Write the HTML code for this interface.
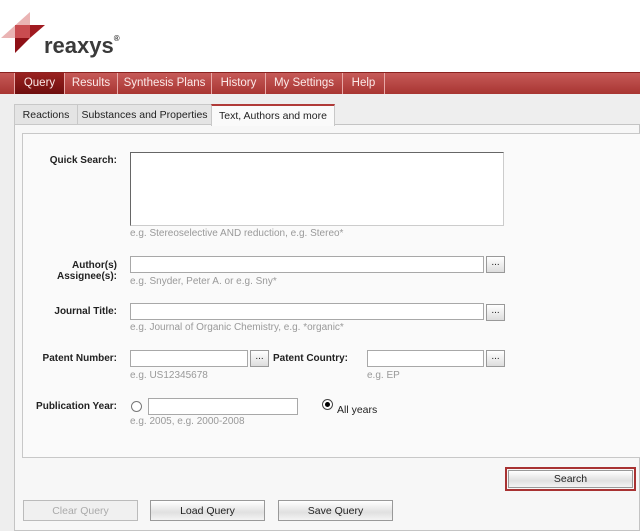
<!DOCTYPE html>
<html><head><style>
*{margin:0;padding:0;box-sizing:border-box}
body{width:640px;height:531px;background:#fff;font-family:"Liberation Sans",sans-serif;font-size:11px;position:relative;overflow:hidden;color:#222}
.a{position:absolute}
.nav{left:0;top:72px;width:640px;height:22px;background:linear-gradient(#c65a58,#a83532);border-top:1px solid #8a2220}
.nav span{position:absolute;top:0;height:21px;line-height:20px;color:#fbe9e8;font-size:11.5px;text-align:center;border-left:1px solid #e8a8a6}
.gray{left:0;top:94px;width:640px;height:437px;background:#eeeeee}
.st{top:104px;height:21px;line-height:20px;text-align:center;border:1px solid #c8c8c8;background:#e4e4e4;font-size:10.5px}
.panel{left:14px;top:124px;width:626px;height:407px;background:#f7f7f7;border:1px solid #c4c4c4}
.box{left:22px;top:133px;width:618px;height:325px;background:#fafafa;border:1px solid #c8c8c8;border-right:none}
.lbl{font-weight:bold;text-align:right;font-size:10px}
.in{background:#fff;border:1px solid #a8a8a8}
.hint{color:#999;font-size:10px}
.dot{width:19px;height:17px;border:1px solid #999;background:linear-gradient(#fff,#ddd);font-size:10px;text-align:center;line-height:12px}
.btn{height:21px;border:1px solid #999;background:linear-gradient(#fff,#e0e0e0 60%,#f4f4f4);text-align:center;line-height:20px;font-size:10.5px}
.rad{width:11px;height:11px;border-radius:50%;border:1px solid #777;background:#fff}
</style></head><body>
<svg class="a" style="left:0;top:0" width="46" height="56" viewBox="0 0 46 56">
<polygon points="30,12 30,25 15,25 15,38 1,38" fill="#eab4b4"/>
<polygon points="15,25 30,25 30,38 15,38" fill="#c94c50"/>
<polygon points="30,25 45,25 30,38" fill="#a01a20"/>
<polygon points="15,38 30,38 15,53" fill="#8e1016"/>
</svg>
<div class="a" style="left:44px;top:33px;font-size:22px;font-weight:bold;color:#3a3a3a;letter-spacing:0">reaxys<sup style="font-size:8px;vertical-align:12px">®</sup></div>
<div class="a nav">
<span style="left:14px;width:50px;background:linear-gradient(#9a2220,#6e0e0e);border-left:1px solid #e8a8a6">Query</span>
<span style="left:64px;width:53px">Results</span>
<span style="left:117px;width:94px">Synthesis Plans</span>
<span style="left:211px;width:54px">History</span>
<span style="left:265px;width:77px">My Settings</span>
<span style="left:342px;width:42px">Help</span>
<span style="left:384px;width:1px"></span>
</div>
<div class="a gray"></div>
<div class="a panel"></div>
<div class="a st" style="left:14px;width:64px">Reactions</div>
<div class="a st" style="left:77px;width:135px">Substances and Properties</div>
<div class="a st" style="left:211px;width:124px;background:#fafafa;border-top:2px solid #b03a38;border-bottom:none;height:22px">Text, Authors and more</div>
<div class="a box"></div>

<div class="a lbl" style="left:30px;top:155px;width:87px">Quick Search:</div>
<div class="a in" style="left:130px;top:152px;width:374px;height:74px;border:1px solid #666;border-right-color:#ccc;border-bottom-color:#ccc"></div>
<div class="a hint" style="left:130px;top:228px">e.g. Stereoselective AND reduction, e.g. Stereo*</div>

<div class="a lbl" style="left:30px;top:260px;width:87px;line-height:11px">Author(s)<br>Assignee(s):</div>
<div class="a in" style="left:130px;top:256px;width:354px;height:17px"></div>
<div class="a dot" style="left:486px;top:256px">...</div>
<div class="a hint" style="left:130px;top:276px">e.g. Snyder, Peter A. or e.g. Sny*</div>

<div class="a lbl" style="left:30px;top:306px;width:87px">Journal Title:</div>
<div class="a in" style="left:130px;top:303px;width:354px;height:17px"></div>
<div class="a dot" style="left:486px;top:304px">...</div>
<div class="a hint" style="left:130px;top:322px">e.g. Journal of Organic Chemistry, e.g. *organic*</div>

<div class="a lbl" style="left:30px;top:353px;width:87px">Patent Number:</div>
<div class="a in" style="left:130px;top:350px;width:118px;height:17px"></div>
<div class="a dot" style="left:250px;top:350px">...</div>
<div class="a lbl" style="left:273px;top:353px;text-align:left">Patent Country:</div>
<div class="a in" style="left:367px;top:350px;width:117px;height:17px"></div>
<div class="a dot" style="left:486px;top:350px">...</div>
<div class="a hint" style="left:130px;top:370px">e.g. US12345678</div>
<div class="a hint" style="left:367px;top:370px">e.g. EP</div>

<div class="a lbl" style="left:25px;top:401px;width:92px">Publication Year:</div>
<div class="a rad" style="left:131px;top:401px"></div>
<div class="a in" style="left:148px;top:398px;width:150px;height:17px"></div>
<div class="a rad" style="left:322px;top:399px;border-color:#444"><div style="width:5px;height:5px;border-radius:50%;background:#000;margin:2px"></div></div>
<div class="a" style="left:337px;top:404px;font-size:10.5px">All years</div>
<div class="a hint" style="left:130px;top:416px">e.g. 2005, e.g. 2000-2008</div>

<div class="a" style="left:505px;top:467px;width:131px;height:24px;border:2px solid #a83232;padding:1px"><div class="btn" style="height:18px;line-height:17px">Search</div></div>
<div class="a btn" style="left:23px;top:500px;width:115px;color:#aaa;border-color:#bbb;background:#f0f0f0">Clear Query</div>
<div class="a btn" style="left:150px;top:500px;width:115px">Load Query</div>
<div class="a btn" style="left:278px;top:500px;width:115px">Save Query</div>
</body></html>
